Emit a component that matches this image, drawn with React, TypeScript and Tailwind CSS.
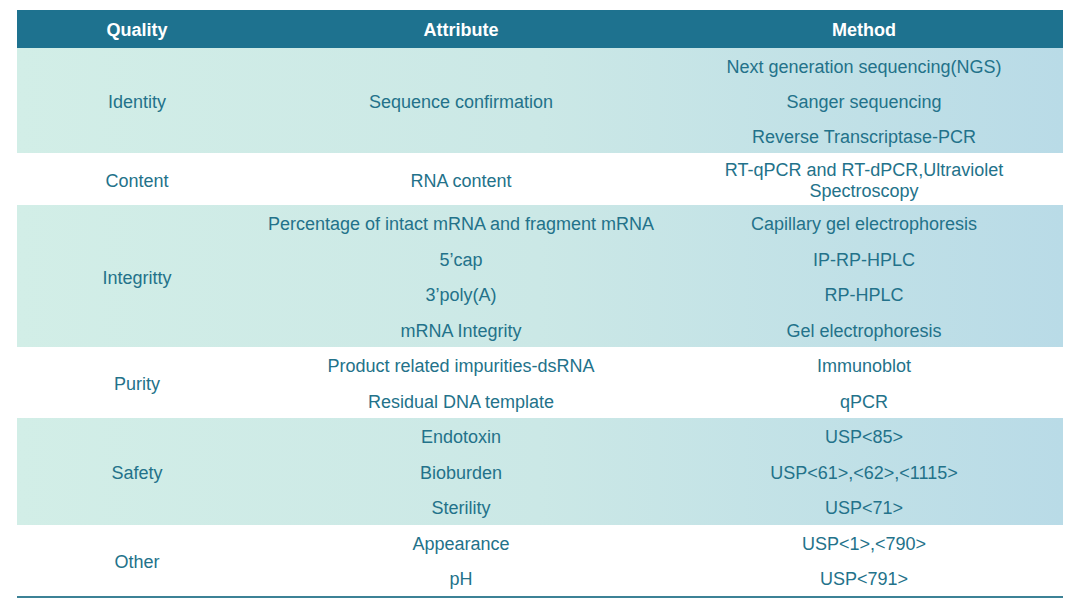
const rows = [
  {
    quality: "Identity",
    tint: true,
    items: [
      ["", "Next generation sequencing(NGS)"],
      ["Sequence confirmation", "Sanger sequencing"],
      ["", "Reverse Transcriptase-PCR"],
    ],
    merged: "Sequence confirmation",
  },
  {
    quality: "Content",
    tint: false,
    content: true,
  },
  {
    quality: "Integritty",
    tint: true,
    items: [
      ["Percentage of intact mRNA and fragment mRNA", "Capillary gel electrophoresis"],
      ["5’cap", "IP-RP-HPLC"],
      ["3’poly(A)", "RP-HPLC"],
      ["mRNA Integrity", "Gel electrophoresis"],
    ],
  },
  {
    quality: "Purity",
    tint: false,
    items: [
      ["Product related impurities-dsRNA", "Immunoblot"],
      ["Residual DNA template", "qPCR"],
    ],
  },
  {
    quality: "Safety",
    tint: true,
    items: [
      ["Endotoxin", "USP<85>"],
      ["Bioburden", "USP<61>,<62>,<1115>"],
      ["Sterility", "USP<71>"],
    ],
  },
  {
    quality: "Other",
    tint: false,
    items: [
      ["Appearance", "USP<1>,<790>"],
      ["pH", "USP<791>"],
    ],
  },
];

export default function App() {
  return (
    <div className="w-[1080px] h-[608px] bg-white pt-[10px] px-[17px] font-['Liberation_Sans',Arial,sans-serif] text-[#23728a] text-[18px]">
      <div className="w-[1046px] border-b-2 border-[#3c8296]">
        {/* header */}
        <div className="flex h-[38px] pt-[2px] items-center bg-[#1e728f] text-white font-bold">
          <div className="w-[240px] text-center">Quality</div>
          <div className="w-[408px] text-center">Attribute</div>
          <div className="flex-1 text-center">Method</div>
        </div>

        {rows.map((r) => (
          <div
            key={r.quality}
            className={`flex ${r.tint ? "bg-gradient-to-r from-[#d2eee7] via-[#cbe8e6] to-[#b9dbe7]" : "bg-white"}`}
          >
            <div className="w-[240px] pt-[4px] flex items-center justify-center">{r.quality}</div>
            {r.content ? (
              <>
                <div className="w-[408px] h-[52px] pt-[4px] flex items-center justify-center">RNA content</div>
                <div className="flex-1 pt-[4px] flex flex-col items-center justify-center leading-[21px] text-center">
                  <div>RT-qPCR and RT-dPCR,Ultraviolet</div>
                  <div>Spectroscopy</div>
                </div>
              </>
            ) : r.merged ? (
              <>
                <div className="w-[408px] pt-[4px] flex items-center justify-center">{r.merged}</div>
                <div className="flex-1 flex flex-col">
                  {r.items!.map((it) => (
                    <div key={it[1]} className="h-[35px] pt-[4px] flex items-center justify-center">{it[1]}</div>
                  ))}
                </div>
              </>
            ) : (
              <div className="flex-1 flex flex-col">
                {r.items!.map((it) => (
                  <div key={it[0]} className="flex h-[35.5px] pt-[4px] items-center">
                    <div className="w-[408px] text-center">{it[0]}</div>
                    <div className="flex-1 text-center">{it[1]}</div>
                  </div>
                ))}
              </div>
            )}
          </div>
        ))}
      </div>
    </div>
  );
}
